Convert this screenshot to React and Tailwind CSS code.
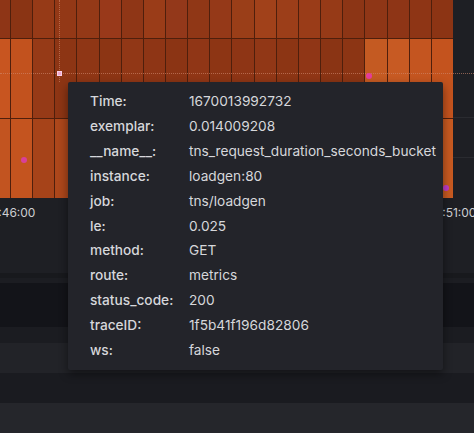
const rows = [
  // partial top row
  ["#8e3516", "#8a3414", "#963a17", "#933816", "#943917", "#99391a", "#8f3616", "#9a3c18", "#93381a", "#903716", "#953918", "#9a3e18", "#a1411a", "#9c3e19", "#9a3c18", "#963a17", "#8c3515", "#8f3616", "#8e3516", "#8e3515", "#8c3414"],
  ["#c85520", "#c2521e", "#963a17", "#8d3514", "#8f3615", "#8c3514", "#913716", "#8e3515", "#8b3414", "#903616", "#8d3514", "#8e3515", "#913716", "#8c3514", "#903616", "#8a3414", "#8c3514", "#c45a22", "#c75a23", "#c45520", "#c4531e"],
  ["#c25420", "#c4541f", "#a64319", "#ad471b", "#a84519", "#9e4018", "#a34219", "#9a3d17", "#a54419", "#a04118", "#a84619", "#9d3f18", "#a34219", "#9a3d17", "#a54419", "#a04118", "#b04a1b", "#c45a22", "#c75a23", "#c45520", "#c85a21"],
];

const fields = [
  ["Time:", "1670013992732"],
  ["exemplar:", "0.014009208"],
  ["__name__:", "tns_request_duration_seconds_bucket"],
  ["instance:", "loadgen:80"],
  ["job:", "tns/loadgen"],
  ["le:", "0.025"],
  ["method:", "GET"],
  ["route:", "metrics"],
  ["status_code:", "200"],
  ["traceID:", "1f5b41f196d82806"],
  ["ws:", "false"],
];

function Heatmap() {
  return (
    <div className="grid w-[453px] h-[198px] grid-cols-[10px_repeat(20,minmax(0,1fr))] grid-rows-[38px_79px_79px] gap-px bg-[#4f1f0c]">
      {rows.map((r, i) =>
        r.map((c, j) => (
          <div key={`${i}-${j}`} style={{ backgroundColor: c }} />
        ))
      )}
    </div>
  );
}

function Tooltip() {
  return (
    <div className="absolute left-[68px] top-[82px] w-[375px] h-[288px] rounded-[2px] bg-[#23242a] shadow-[0_4px_10px_rgba(0,0,0,0.45)] pl-[22px] pt-[7px]">
      <div className="grid grid-cols-[99px_1fr] text-[13.7px] leading-[24.9px] text-[#d6d7db]">
        {fields.map(([k, v]) => (
          <div key={k} className="contents">
            <div className="font-medium">{k}</div>
            <div className="whitespace-nowrap">{v}</div>
          </div>
        ))}
      </div>
    </div>
  );
}

export default function App() {
  return (
    <div
      className="relative w-[474px] h-[433px] overflow-hidden bg-[#1e1f24]"
      style={{ fontFamily: "Inter, 'Noto Sans', sans-serif" }}
    >
      {/* plot area */}
      <div className="flex h-[198px]">
        <Heatmap />
        <div className="flex-1 flex flex-col">
          <div className="h-[118px] border-b border-[#2a2b30]" />
          <div className="h-[40px] border-b border-[#2a2b30]" />
        </div>
      </div>

      {/* time axis */}
      <div className="flex h-[75px] pt-[7px] text-[12px] leading-[16px] text-[#cdced2] whitespace-nowrap">
        <span className="w-[444px] shrink-0 ml-[-14px]">15:46:00</span>
        <span className="shrink-0">15:51:00</span>
      </div>

      {/* lower panels */}
      <div className="h-[5px] bg-[#18191d]" />
      <div className="h-[5px] bg-[#1c1d22]" />
      <div className="h-[44px] bg-[#131419]" />
      <div className="h-[16px] bg-[#1b1c21]" />
      <div className="h-[30px] bg-[#222328]" />
      <div className="h-[30px] bg-[#1a1b20]" />
      <div className="h-[30px] bg-[#25262b]" />

      {/* crosshair */}
      <div className="absolute left-0 right-0 top-[73px] border-t border-dotted border-[#d08a70]/60" />
      <div className="absolute left-[59px] top-0 h-[82px] border-l border-dotted border-[#d08a70]/60" />
      <div className="absolute left-[57px] top-[71px] w-[5px] h-[5px] bg-[#f0a8d0] border border-[#f8d0e8]" />

      {/* exemplar dots */}
      <div className="absolute left-[366px] top-[73px] w-[6px] h-[6px] rounded-full bg-[#e43c9c]" />
      <div className="absolute left-[21px] top-[157px] w-[6px] h-[6px] rounded-full bg-[#d8409a]" />
      <div className="absolute left-[443px] top-[185px] w-[6px] h-[6px] rounded-full bg-[#c03cc8]" />

      <Tooltip />
    </div>
  );
}
